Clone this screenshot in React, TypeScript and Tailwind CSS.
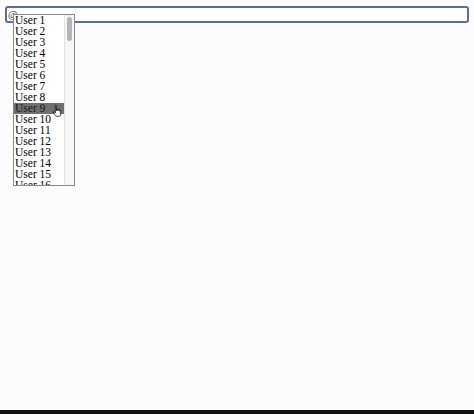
import React from 'react';

const users = Array.from({ length: 16 }, (_, i) => `User ${i + 1}`);

function HandCursor() {
  return (
    <svg width="12" height="13" viewBox="0 0 11 12" className="absolute left-[38px] top-[1px]">
      <path
        d="M3 1.2c0-.6.9-.6.9 0V6h.4V4.8c0-.6.9-.6.9 0V6h.4V5.2c0-.6.9-.6.9 0V6.3h.3V5.8c0-.6.9-.6.9 0v3C8.7 10.5 7.6 11.4 6 11.4H5C3.8 11.4 3 10.6 2.4 9.6L1.1 7.4c-.3-.5.4-1 .8-.5L3 8.3z"
        fill="#fff"
        stroke="#111"
        strokeWidth="0.8"
        strokeLinejoin="round"
      />
    </svg>
  );
}

export default function App() {
  return (
    <div className="relative flex h-[414px] w-full flex-col bg-[#fcfbfe]" style={{ fontFamily: '"Liberation Serif", serif' }}>
      <div className="px-[5px] pt-[6px]">
        <div className="flex h-[17px] items-center rounded-[3px] border-2 border-[#5b6f96] bg-white px-[1px]">
          <span className="text-[10px] leading-none text-[#333]">@</span>
        </div>
      </div>

      <div className="absolute left-[13px] top-[14px] flex h-[172px] w-[62px] border border-[#8a8a8a] bg-white">
        <div className="flex-1 overflow-hidden">
          {users.map((u) => (
            <div
              key={u}
              className={
                u === 'User 9'
                  ? 'relative h-[11px] whitespace-nowrap bg-[#6f6f6f] pl-[1px] text-[11.5px] leading-[11px] text-[#1a1a1a]'
                  : 'h-[11px] whitespace-nowrap pl-[1px] text-[11.5px] leading-[11px] text-black'
              }
            >
              {u}
              {u === 'User 9' && <HandCursor />}
            </div>
          ))}
        </div>
        <div className="flex w-[10px] justify-center border-l border-[#e2e2e2] bg-[#f6f6f6] pt-[2px]">
          <div className="h-[24px] w-[5px] rounded-full bg-[#b4b4b4]" />
        </div>
      </div>

      <div className="flex-1" />
      <div className="h-[4px] bg-[#141414]" />
    </div>
  );
}
